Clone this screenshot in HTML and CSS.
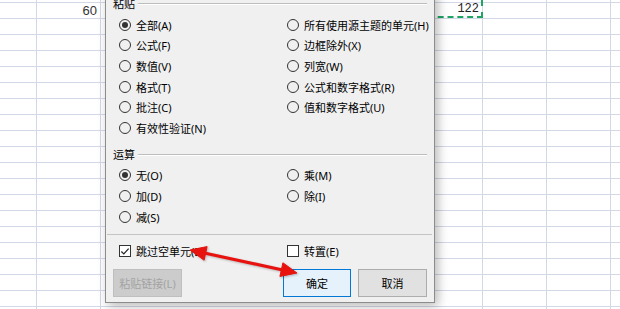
FILE: index.html
```html
<!DOCTYPE html>
<html lang="zh-CN">
<head>
  <meta charset="UTF-8">
  <title>选择性粘贴</title>
  <link rel="stylesheet" href="styles.css">
</head>
<body>
  <div class="sheet">
    <div class="sheet-row">
      <div class="cell cell-a"></div>
      <div class="cell cell-b">60</div>
      <div class="cell cell-gap"></div>
      <div class="cell cell-copy">122</div>
    </div>
  </div>

  <div class="dialog">
    <div class="group-title"><span>粘贴</span><i></i></div>
    <div class="options options-paste">
      <div class="col">
        <label class="opt"><span class="radio checked"></span>全部(A)</label>
        <label class="opt"><span class="radio"></span>公式(F)</label>
        <label class="opt"><span class="radio"></span>数值(V)</label>
        <label class="opt"><span class="radio"></span>格式(T)</label>
        <label class="opt"><span class="radio"></span>批注(C)</label>
        <label class="opt"><span class="radio"></span>有效性验证(N)</label>
      </div>
      <div class="col">
        <label class="opt"><span class="radio"></span>所有使用源主题的单元(H)</label>
        <label class="opt"><span class="radio"></span>边框除外(X)</label>
        <label class="opt"><span class="radio"></span>列宽(W)</label>
        <label class="opt"><span class="radio"></span>公式和数字格式(R)</label>
        <label class="opt"><span class="radio"></span>值和数字格式(U)</label>
      </div>
    </div>

    <div class="group-title group-op"><span>运算</span><i></i></div>
    <div class="options options-op">
      <div class="col">
        <label class="opt"><span class="radio checked"></span>无(O)</label>
        <label class="opt"><span class="radio"></span>加(D)</label>
        <label class="opt"><span class="radio"></span>减(S)</label>
      </div>
      <div class="col">
        <label class="opt"><span class="radio"></span>乘(M)</label>
        <label class="opt"><span class="radio"></span>除(I)</label>
      </div>
    </div>

    <div class="separator"></div>

    <div class="checks">
      <label class="opt">
        <span class="checkbox">
          <svg width="11" height="11" viewBox="0 0 11 11"><polyline points="1.5,5.5 4.2,8.2 9.5,2.3" fill="none" stroke="#222" stroke-width="1.3"/></svg>
        </span>跳过空单元(B)
      </label>
      <label class="opt"><span class="checkbox"></span>转置(E)</label>
    </div>

    <div class="buttons">
      <button class="btn btn-disabled">粘贴链接(L)</button>
      <div class="btn-group">
        <button class="btn btn-default">确定</button>
        <button class="btn">取消</button>
      </div>
    </div>
  </div>

  <svg class="arrow" width="620" height="309" viewBox="0 0 620 309">
    <g fill="#e8130f" stroke="#e8130f">
      <line x1="202" y1="252.5" x2="285" y2="270.5" stroke-width="3.2"/>
      <polygon points="190,250 204.1,260.2 207.1,246.6" stroke-width="1"/>
      <polygon points="297,273 279.9,276.4 282.9,262.8" stroke-width="1"/>
    </g>
  </svg>
</body>
</html>
```

FILE: styles.css
```css
body {
  margin: 0;
  width: 620px;
  height: 309px;
  overflow: hidden;
  position: relative;
  font-family: "Noto Sans", "Noto Sans CJK SC", sans-serif;
  font-size: 11px;
  color: #000;
  background: #fff;
}

/* spreadsheet behind the dialog */
.sheet {
  width: 620px;
  height: 309px;
  background-color: #fff;
  background-image:
    linear-gradient(to right, #d3d8e6 1px, transparent 1px),
    linear-gradient(to right, #d3d8e6 1px, transparent 1px),
    linear-gradient(to right, #d3d8e6 1px, transparent 1px),
    linear-gradient(to right, #d3d8e6 1px, transparent 1px),
    linear-gradient(to right, #d3d8e6 1px, transparent 1px),
    linear-gradient(#d3d8e6 1px, transparent 1px);
  background-size: 1px 100%, 1px 100%, 1px 100%, 1px 100%, 1px 100%, 100% 16px;
  background-position: 36px 0, 100px 0, 482px 0, 546px 0, 610px 0, 0 2px;
  background-repeat: no-repeat, no-repeat, no-repeat, no-repeat, no-repeat, repeat;
}
.sheet-row { display: flex; height: 18px; }
.cell {
  box-sizing: border-box;
  height: 18px;
  display: flex;
  align-items: flex-end;
  justify-content: flex-end;
  padding: 0 3px 0 0;
  line-height: 13px;
  color: #333;
}
.cell-a { width: 36px; }
.cell-b { width: 64px; font-family: "Liberation Sans", sans-serif; font-size: 13px; padding-bottom: 1px; }
.cell-gap { width: 318px; }
.cell-copy {
  width: 65px;
  padding-right: 2px;
  font-family: "Liberation Mono", monospace;
  font-size: 12px;
  color: #222;
  border-right: 2px dashed #1fa463;
  border-bottom: 2px dashed #1fa463;
}

/* paste special dialog */
.dialog {
  position: absolute;
  left: 105px;
  top: -8px;
  width: 330px;
  height: 311px;
  box-sizing: border-box;
  padding: 0 7px;
  background: #f0f0f0;
  border: 1px solid #8c8c8c;
  box-shadow: 3px 3px 10px rgba(0, 0, 0, 0.28);
}
.group-title {
  display: flex;
  align-items: center;
  height: 20px;
}
.group-title span { margin-right: 3px; }
.group-title i {
  flex: 1;
  height: 1px;
  background: #bdbdbd;
  border-bottom: 1px solid #fff;
  margin-top: 1px;
}
.group-op { margin-top: 6px; }

.options {
  display: grid;
  grid-template-columns: 168px 1fr;
  padding-left: 6px;
  margin-top: 1.5px;
}
.options-op { margin-top: 1px; }
.opt {
  display: flex;
  align-items: center;
  height: 20.6px;
  white-space: nowrap;
}
.radio {
  box-sizing: border-box;
  width: 12px;
  height: 12px;
  border: 1px solid #333;
  border-radius: 50%;
  margin-right: 5px;
  display: flex;
  align-items: center;
  justify-content: center;
}
.radio.checked::after {
  content: "";
  width: 6px;
  height: 6px;
  border-radius: 50%;
  background: #333;
}

.separator {
  margin: 7px -5px 0 -6px;
  height: 1px;
  background: #c4c4c4;
}

.checks {
  display: grid;
  grid-template-columns: 168px 1fr;
  padding-left: 6px;
  margin-top: 6px;
}
.checks .opt { height: 20px; }
.checkbox {
  box-sizing: border-box;
  width: 12px;
  height: 12px;
  border: 1px solid #333;
  background: #fff;
  margin-right: 5px;
  display: flex;
}
.checkbox svg { display: block; }

.buttons {
  display: flex;
  justify-content: space-between;
  margin-top: 8px;
}
.btn-group { display: flex; gap: 7px; }
.btn {
  width: 69px;
  height: 28px;
  box-sizing: border-box;
  font: inherit;
  color: #000;
  background: #e1e1e1;
  border: 1px solid #adadad;
  padding: 0;
}
.btn-default {
  width: 68px;
  background: #e5f1fb;
  border: 1px solid #0078d7;
}
.btn-disabled {
  background: #cccccc;
  border-color: #bfbfbf;
  color: #a3a3a3;
}

.arrow {
  position: absolute;
  left: 0;
  top: 0;
  pointer-events: none;
  filter: drop-shadow(1px 1px 1px rgba(0, 0, 0, 0.25));
}
```
